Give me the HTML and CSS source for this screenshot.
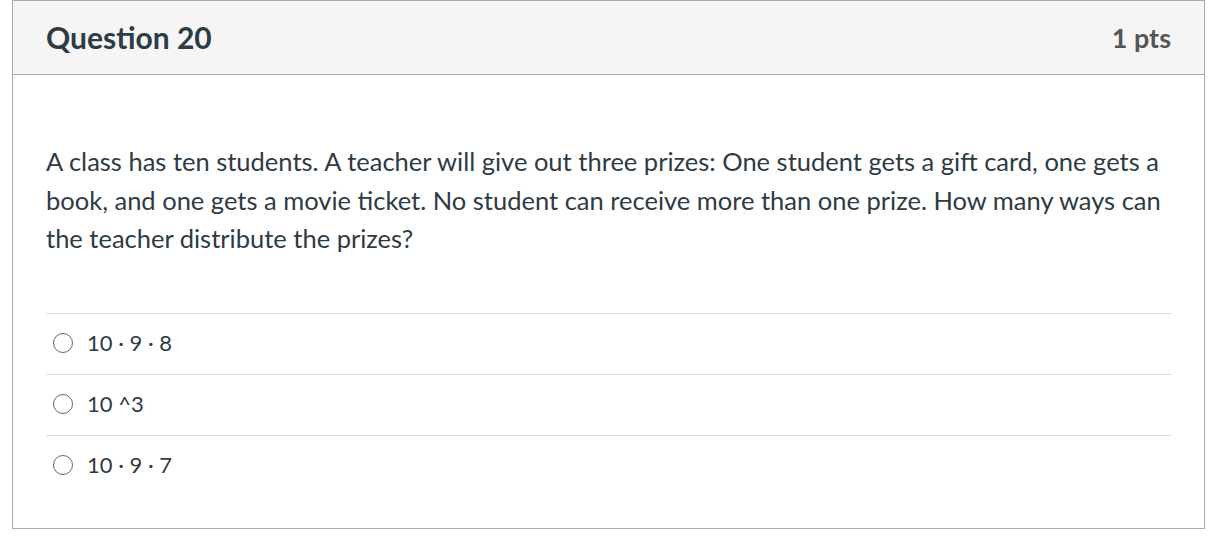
FILE: index.html
```html
<!DOCTYPE html>
<html>
<head>
<meta charset="utf-8">
<link rel="stylesheet" href="styles.css">
</head>
<body>
<div class="card">
  <div class="card-header">
    <h2 class="q-title">Question 20</h2>
    <span class="q-pts">1 pts</span>
  </div>
  <div class="card-body">
    <p class="q-text">A class has ten students. A teacher will give out three prizes: One student gets a gift card, one gets a book, and one gets a movie ticket. No student can receive more than one prize. How many ways can the teacher distribute the prizes?</p>
    <div class="answers">
      <label class="answer"><span class="radio"></span><span class="answer-text">10 · 9 · 8</span></label>
      <label class="answer"><span class="radio"></span><span class="answer-text">10 ^3</span></label>
      <label class="answer"><span class="radio"></span><span class="answer-text">10 · 9 · 7</span></label>
    </div>
  </div>
</div>
</body>
</html>
```
FILE: styles.css
```css
html, body {
  margin: 0;
  padding: 0;
  background: #fff;
}
body {
  font-family: Lato, "Liberation Sans", sans-serif;
  color: #2d3b45;
}
.card {
  margin-left: 12px;
  width: 1193px;
  height: 529px;
  box-sizing: border-box;
  border: 1px solid #aaaaaa;
  display: flex;
  flex-direction: column;
}
.card-header {
  flex-shrink: 0;
  height: 74px;
  box-sizing: border-box;
  background: #f5f5f5;
  border-bottom: 1px solid #aaaaaa;
  display: flex;
  align-items: center;
  justify-content: space-between;
  padding: 0 33px 0 33px;
}
.q-title {
  margin: 0;
  font-size: 30px;
  font-weight: 700;
  color: #2d3b45;
  position: relative;
  top: -1px;
}
.q-pts {
  font-size: 27px;
  font-weight: 700;
  color: #555;
}
.card-body {
  padding: 67px 33px 0 33px;
}
.q-text {
  margin: 0;
  font-size: 25.5px;
  line-height: 38.5px;
}
.answers {
  margin-top: 55px;
}
.answer {
  display: flex;
  align-items: center;
  height: 61px;
  border-top: 1px solid #dddddd;
  box-sizing: border-box;
}
.radio {
  width: 20px;
  height: 20px;
  border: 1.5px solid #666;
  border-radius: 50%;
  box-sizing: border-box;
  margin-left: 7px;
  margin-right: 14px;
  position: relative;
  top: -1px;
}
.answer-text {
  font-size: 22px;
  position: relative;
  top: -1px;
}
```
